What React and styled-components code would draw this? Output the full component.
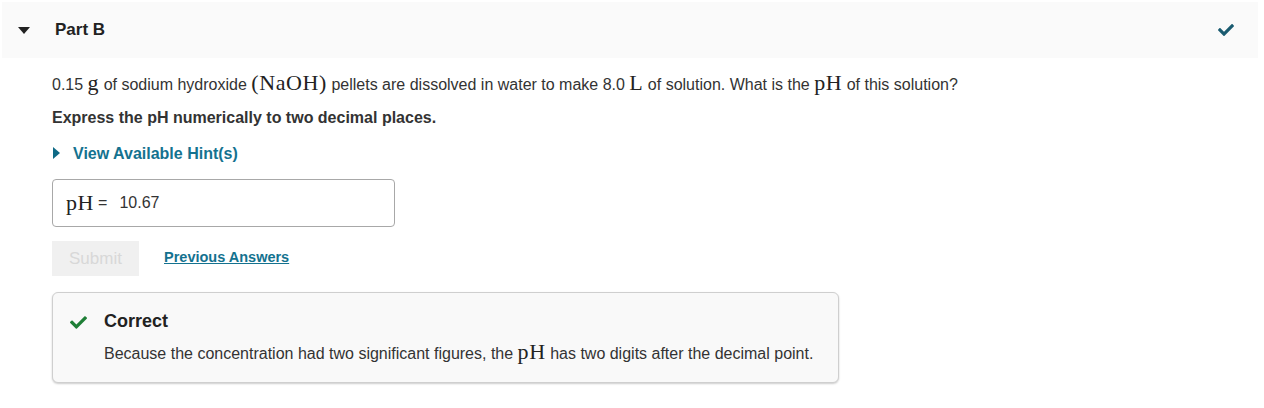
import React from "react";
import styled, { createGlobalStyle } from "styled-components";
import { FaCheck } from "react-icons/fa";

const GlobalStyle = createGlobalStyle`
  html, body {
    margin: 0;
    padding: 0;
    background: #fff;
  }
  body {
    font-family: Arial, "Liberation Sans", sans-serif;
    color: #333;
  }
`;

const Page = styled.div`
  width: 1264px;
  height: 408px;
  padding: 2px 6px 0 2px;
  box-sizing: border-box;
`;

const Header = styled.div`
  height: 56px;
  background: #fafafa;
  display: flex;
  align-items: center;
  padding: 0 24px 0 16px;
`;

const Caret = styled.span`
  width: 0;
  height: 0;
  border-left: 6px solid transparent;
  border-right: 6px solid transparent;
  border-top: 7px solid #222;
  margin-right: 25px;
  margin-top: 1px;
`;

const PartTitle = styled.h2`
  flex: 1;
  margin: 0;
  font-size: 17px;
  font-weight: bold;
  color: #222;
`;

const Body = styled.div`
  padding: 14px 0 0 50px;
`;

const Question = styled.p`
  margin: 0;
  font-size: 16px;
  line-height: 22px;
  color: #333;
`;

const M = styled.span`
  font-family: "Liberation Serif", "Times New Roman", serif;
  font-size: 22px;
  letter-spacing: 0.6px;
  color: #222;
`;

const Instruction = styled.p`
  margin: 11px 0 0;
  font-size: 16px;
  font-weight: bold;
  line-height: 22px;
  color: #333;
`;

const Hint = styled.div`
  margin-top: 14px;
  display: flex;
  align-items: center;
  color: #14728f;
  font-weight: bold;
  font-size: 16px;
  line-height: 22px;
`;

const HintCaret = styled.span`
  width: 0;
  height: 0;
  border-top: 6px solid transparent;
  border-bottom: 6px solid transparent;
  border-left: 7px solid #0f6a86;
  margin: -2px 13px 0 1px;
`;

const AnswerBox = styled.div`
  margin-top: 14px;
  width: 343px;
  height: 48px;
  box-sizing: border-box;
  border: 1px solid #a8a8a8;
  border-radius: 4px;
  display: flex;
  align-items: center;
  padding-left: 13px;
  font-size: 16px;
  color: #333;
`;

const Eq = styled.span`
  margin: 0 12px 0 4px;
`;

const Actions = styled.div`
  margin-top: 14px;
  display: flex;
  align-items: center;
  gap: 25px;
`;

const SubmitButton = styled.button`
  width: 87px;
  height: 35px;
  border: none;
  background: #f0f0f0;
  color: #d8d8d8;
  font-family: Arial, "Liberation Sans", sans-serif;
  font-size: 17px;
  padding: 0;
`;

const PrevLink = styled.a`
  color: #14728f;
  font-weight: bold;
  font-size: 14.5px;
  text-decoration: underline;
  margin-bottom: 4px;
`;

const Feedback = styled.div`
  margin-top: 16px;
  width: 787px;
  height: 91px;
  box-sizing: border-box;
  background: #f9f9f9;
  border: 1px solid #cfcfcf;
  border-radius: 6px;
  box-shadow: 0 1px 2px rgba(0, 0, 0, 0.2);
  padding: 18px 0 0 17px;
`;

const FeedbackHead = styled.div`
  display: flex;
  align-items: center;
  gap: 17px;
`;

const GreenCheck = styled(FaCheck)`
  color: #1f7f37;
  margin-top: 1px;
`;

const HeaderCheck = styled(FaCheck)`
  color: #1a5b70;
`;

const FeedbackTitle = styled.span`
  font-size: 18px;
  font-weight: bold;
  color: #222;
`;

const FeedbackText = styled.p`
  margin: 9px 0 0 34px;
  font-size: 16px;
  line-height: 22px;
  color: #333;
`;

export default function App() {
  return (
    <Page>
      <GlobalStyle />
      <Header>
        <Caret />
        <PartTitle>Part B</PartTitle>
        <HeaderCheck size={16} />
      </Header>
      <Body>
        <Question>
          0.15 <M>g</M> of sodium hydroxide <M>(NaOH)</M> pellets are dissolved in
          water to make 8.0 <M>L</M> of solution. What is the <M>pH</M> of this
          solution?
        </Question>
        <Instruction>Express the pH numerically to two decimal places.</Instruction>
        <Hint>
          <HintCaret />
          View Available Hint(s)
        </Hint>
        <AnswerBox>
          <M>pH</M>
          <Eq>=</Eq>
          10.67
        </AnswerBox>
        <Actions>
          <SubmitButton disabled>Submit</SubmitButton>
          <PrevLink href="#">Previous Answers</PrevLink>
        </Actions>
        <Feedback>
          <FeedbackHead>
            <GreenCheck size={17} />
            <FeedbackTitle>Correct</FeedbackTitle>
          </FeedbackHead>
          <FeedbackText>
            Because the concentration had two significant figures, the <M>pH</M> has
            two digits after the decimal point.
          </FeedbackText>
        </Feedback>
      </Body>
    </Page>
  );
}
